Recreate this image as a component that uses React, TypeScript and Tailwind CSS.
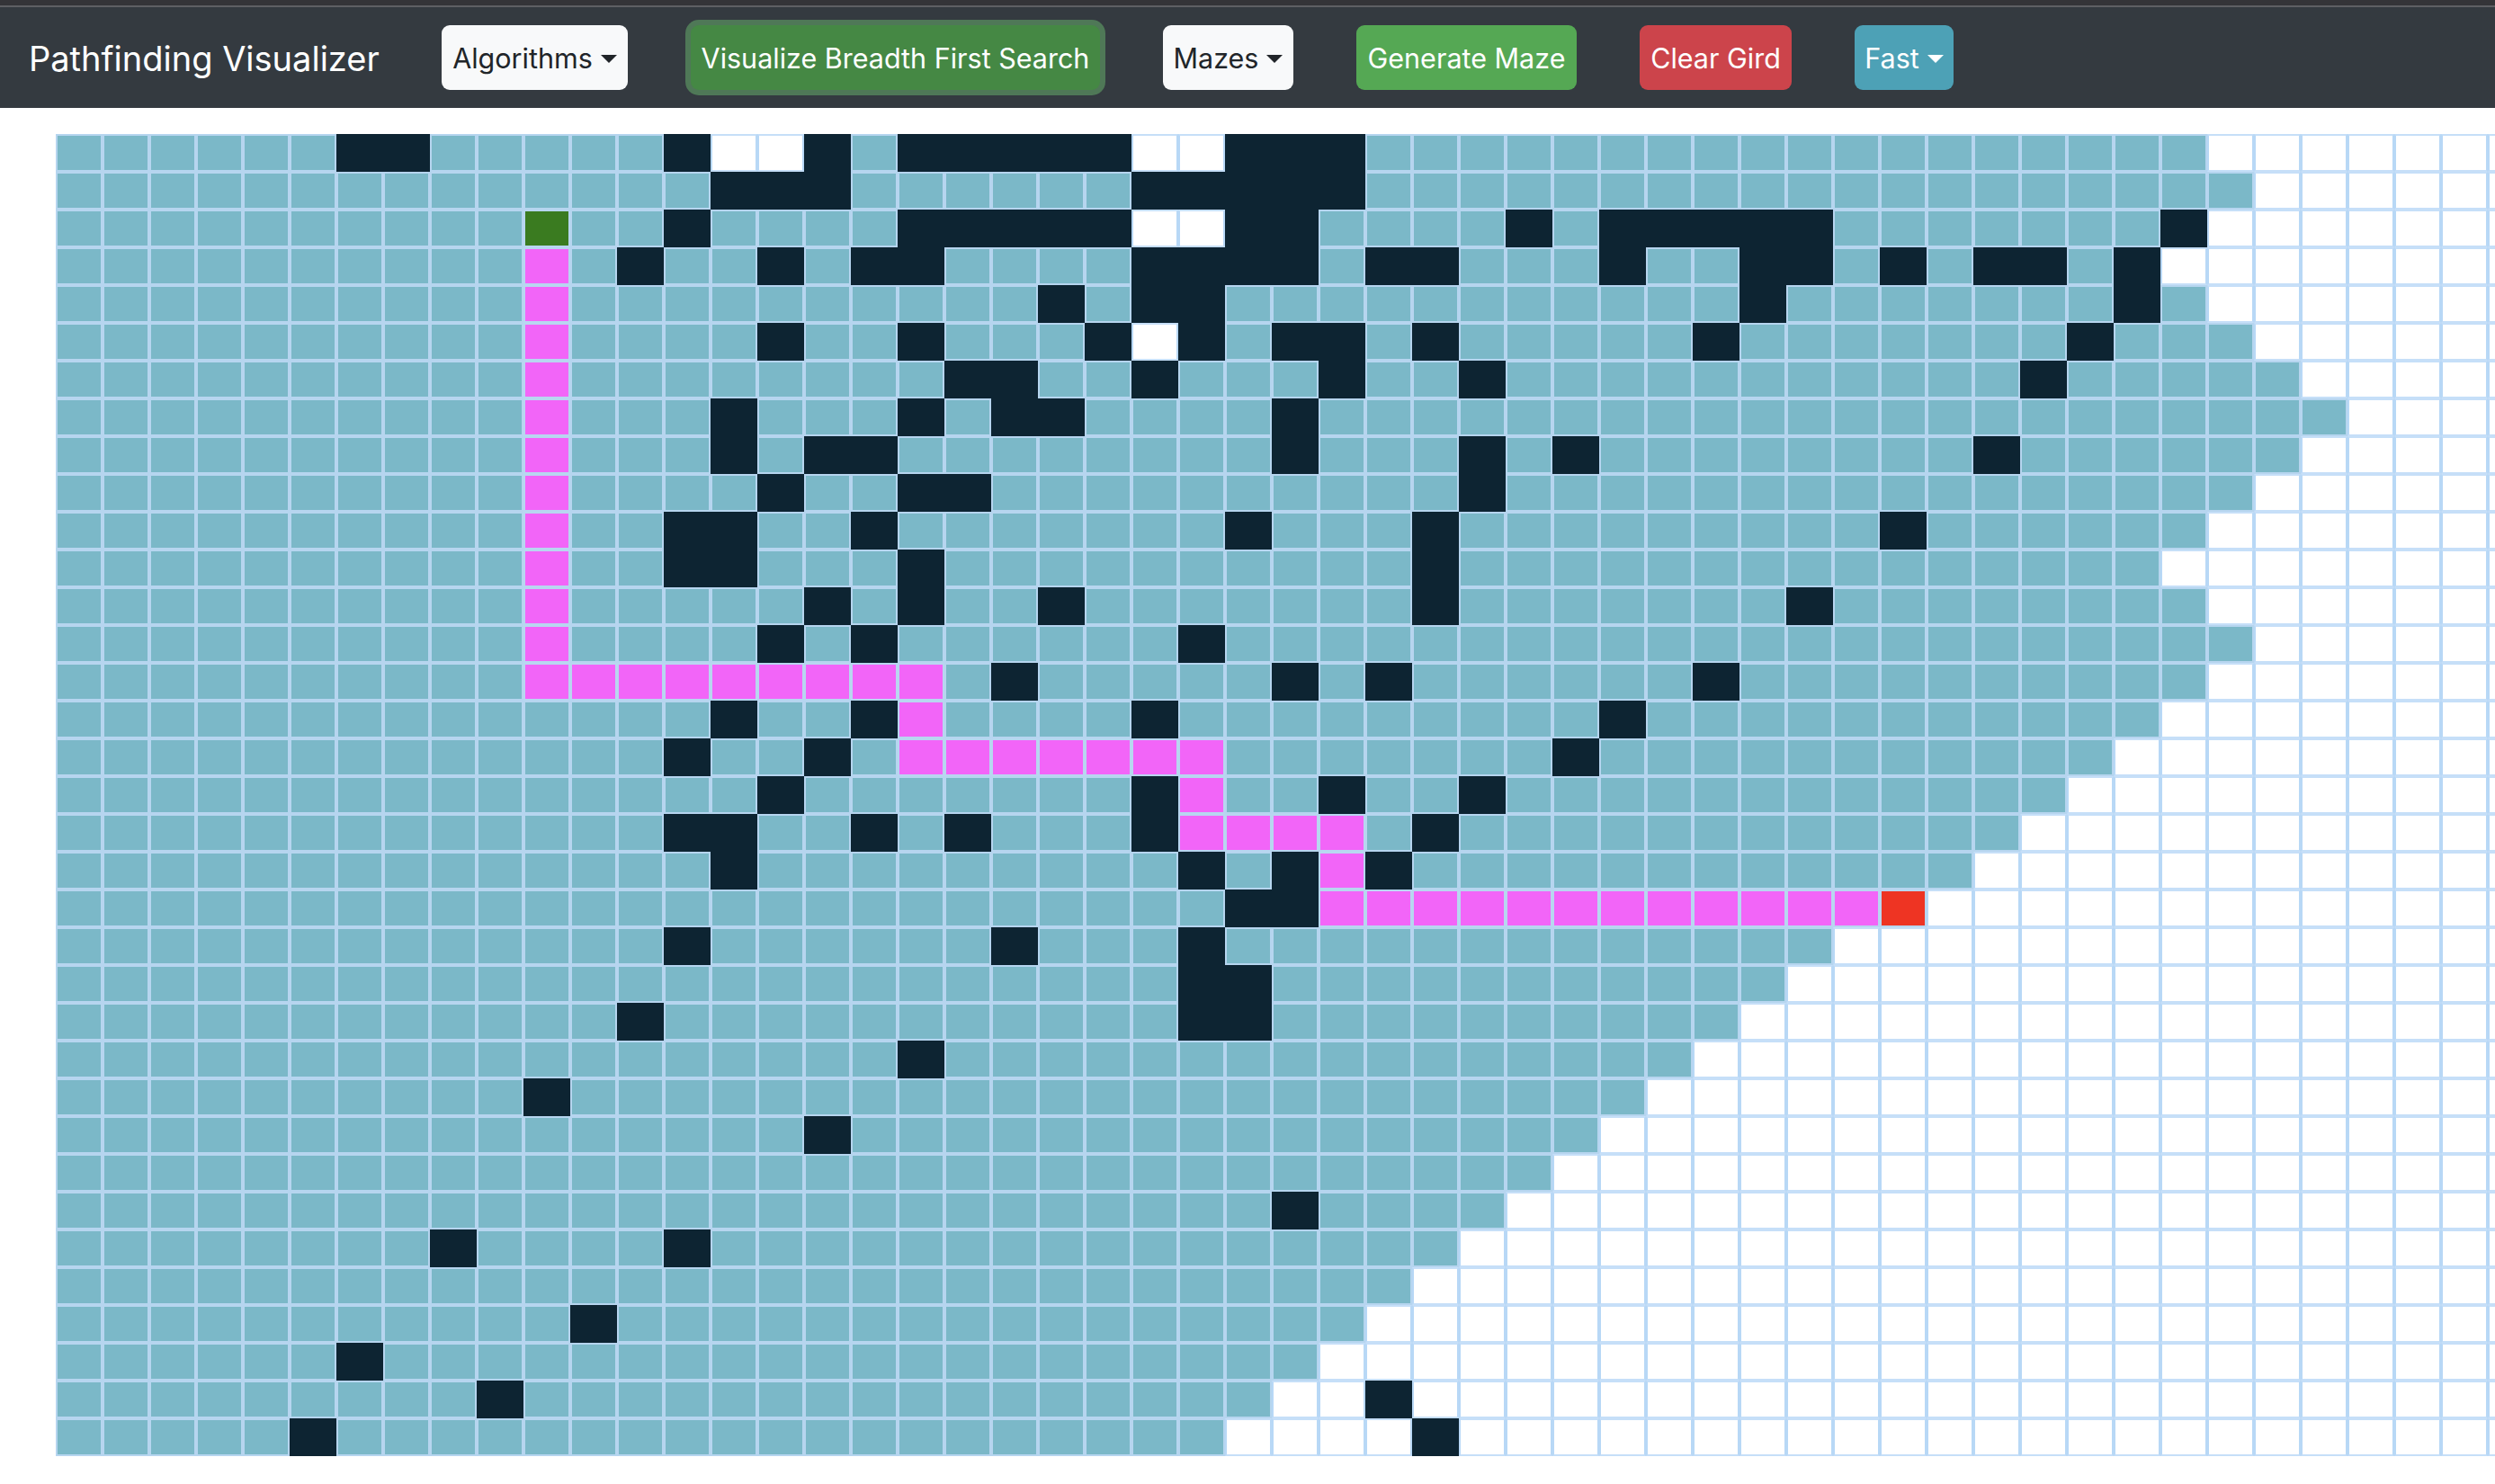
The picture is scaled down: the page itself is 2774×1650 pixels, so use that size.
import React from 'react';

const ROWS = 35;
const COLS = 53;

const START = [2, 10];
const FINISH = [20, 39];

// wall columns for every row
const WALLS: number[][] = [
  [6, 7, 13, 16, 18, 19, 20, 21, 22, 25, 26, 27],
  [14, 15, 16, 23, 24, 25, 26, 27],
  [13, 18, 19, 20, 21, 22, 25, 26, 31, 33, 34, 35, 36, 37, 45],
  [12, 15, 17, 18, 23, 24, 25, 26, 28, 29, 33, 36, 37, 39, 41, 42, 44],
  [21, 23, 24, 36, 44],
  [15, 18, 22, 24, 26, 27, 29, 35, 43],
  [19, 20, 23, 27, 30, 42],
  [14, 18, 20, 21, 26],
  [14, 16, 17, 26, 30, 32, 41],
  [15, 18, 19, 30],
  [13, 14, 17, 25, 29, 39],
  [13, 14, 18, 29],
  [16, 18, 21, 29, 37],
  [15, 17, 24],
  [20, 26, 28, 35],
  [14, 17, 23, 33],
  [13, 16, 32],
  [15, 23, 27, 30],
  [13, 14, 17, 19, 23, 29],
  [14, 24, 26, 28],
  [25, 26],
  [13, 20, 24],
  [24, 25],
  [12, 24, 25],
  [18],
  [10],
  [16],
  [],
  [26],
  [8, 13],
  [],
  [11],
  [6],
  [9, 28],
  [5, 29],
];

// how far the search got in each row
const LAST_VISITED = [
  45, 46, 45, 44, 45, 46, 47, 48, 47, 46, 45, 44, 45, 46, 45, 44, 43, 42, 41, 40, 39, 37, 36, 35,
  34, 33, 32, 31, 30, 29, 28, 27, 26, 25, 24,
];

// cells walled in, the search never reached them
const HOLES: Record<number, number[]> = {
  0: [14, 15, 23, 24],
  2: [23, 24],
  5: [23],
};

// shortest path as [row, fromCol, toCol]
const PATH_RUNS = [
  ...Array.from({ length: 11 }, (_, i) => [3 + i, 10, 10]),
  [14, 10, 18],
  [15, 18, 18],
  [16, 18, 24],
  [17, 24, 24],
  [18, 24, 27],
  [19, 27, 27],
  [20, 27, 38],
];

const isPath = (row: number, col: number) =>
  PATH_RUNS.some(([r, from, to]) => r === row && col >= from && col <= to);

const cellClass = (row: number, col: number) => {
  if (row === START[0] && col === START[1]) return 'bg-[#3a7b20] border-[#b8d6f0]';
  if (row === FINISH[0] && col === FINISH[1]) return 'bg-[#ee3423] border-[#b8d6f0]';
  if (WALLS[row].includes(col)) return 'bg-[#0d2432] border-[#0d2432]';
  if (isPath(row, col)) return 'bg-[#f265f8] border-[#b8d6f0]';
  if (col > LAST_VISITED[row] || HOLES[row]?.includes(col)) {
    return 'bg-white border-x-[#b8d8f6] border-y-[#c6dff8]';
  }
  return 'bg-[#7bb8c8] border-[#b6d5ef]';
};

function Caret() {
  return (
    <span className="ml-[9px] inline-block h-0 w-0 border-x-[9px] border-t-[9px] border-x-transparent border-t-current" />
  );
}

const btn =
  'flex h-[72px] flex-none items-center justify-center rounded-[9px] pt-[2px] text-[30.5px] leading-none';

export default function App() {
  return (
    <div className="h-screen w-full overflow-hidden bg-white font-['Inter',sans-serif]">
      <div className="h-[6px] bg-[#343438]" />
      <div className="h-[2px] bg-[#5e5f63]" />
      <nav className="flex h-[112px] items-center bg-[#343a40]">
        <span className="ml-[32px] w-[459px] flex-none pt-[2px] text-[38px] leading-none text-white">
          Pathfinding Visualizer
        </span>
        <div className="flex items-center gap-[70px]">
          <button className={`${btn} w-[207px] bg-[#f8f9fa] text-[#212529]`}>
            Algorithms
            <Caret />
          </button>
          <button
            className={`${btn} w-[455px] bg-[#458844] text-white ring-[6px] ring-[#4f7857]`}
          >
            Visualize Breadth First Search
          </button>
          <button className={`${btn} w-[145px] bg-[#f8f9fa] text-[#212529]`}>
            Mazes
            <Caret />
          </button>
          <button className={`${btn} w-[245px] bg-[#55a854] text-white`}>Generate Maze</button>
          <button className={`${btn} w-[169px] bg-[#cc444b] text-white`}>Clear Gird</button>
          <button className={`${btn} w-[110px] bg-[#4da1b6] text-white`}>
            Fast
            <Caret />
          </button>
        </div>
      </nav>
      <div className="pl-[62px] pt-[29px]">
        {Array.from({ length: ROWS }, (_, row) => (
          <div key={row} className="flex">
            {Array.from({ length: COLS }, (_, col) => (
              <div
                key={col}
                className={`h-[42px] w-[52px] flex-none border-2 ${cellClass(row, col)}`}
              />
            ))}
          </div>
        ))}
      </div>
    </div>
  );
}
